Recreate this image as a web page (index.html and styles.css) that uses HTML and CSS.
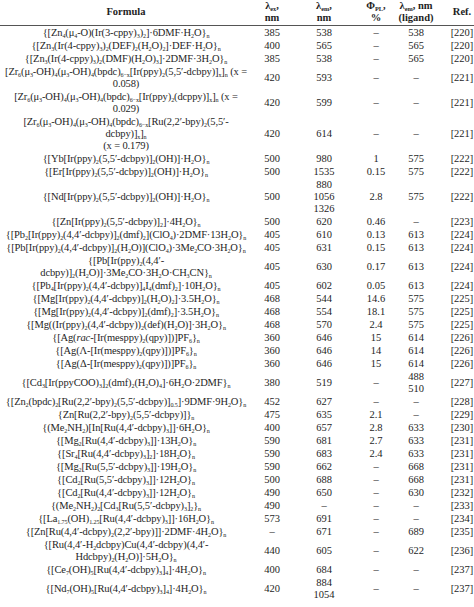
FILE: index.html
```html
<!DOCTYPE html>
<html>
<head>
<meta charset="utf-8">
<link rel="stylesheet" href="styles.css">
</head>
<body>
<table class="tbl">
<colgroup>
<col class="c-formula"><col class="c-ex"><col class="c-em"><col class="c-phi"><col class="c-lig"><col class="c-ref">
</colgroup>
<thead>
<tr>
<th>Formula</th>
<th>λ<sub>ex</sub>,<br>nm</th>
<th>λ<sub>em</sub>,<br>nm</th>
<th>Φ<sub>PL</sub>,<br>%</th>
<th>λ<sub>em</sub>, nm<br>(ligand)</th>
<th>Ref.</th>
</tr>
</thead>
<tbody>
<tr><td class="f">{[Zn<sub>4</sub>(μ<sub>4</sub>-O)(Ir(3-cppy)<sub>3</sub>)<sub>2</sub>]·6DMF·H<sub>2</sub>O}<sub>n</sub></td><td>385</td><td>538</td><td>–</td><td>538</td><td>[220]</td></tr>
<tr><td class="f">{[Zn<sub>3</sub>(Ir(4-cppy)<sub>3</sub>)<sub>2</sub>(DEF)<sub>2</sub>(H<sub>2</sub>O)<sub>2</sub>]·DEF·H<sub>2</sub>O}<sub>n</sub></td><td>400</td><td>565</td><td>–</td><td>565</td><td>[220]</td></tr>
<tr><td class="f">{[Zn<sub>3</sub>(Ir(4-cppy)<sub>3</sub>)<sub>2</sub>(DMF)(H<sub>2</sub>O)<sub>3</sub>]·2DMF·3H<sub>2</sub>O}<sub>n</sub></td><td>385</td><td>538</td><td>–</td><td>565</td><td>[220]</td></tr>
<tr><td class="f">[Zr<sub>6</sub>(μ<sub>3</sub>-OH)<sub>4</sub>(μ<sub>3</sub>-OH)<sub>4</sub>(bpdc)<sub>6−x</sub>[Ir(ppy)<sub>2</sub>(5,5′-dcbpy)]<sub>x</sub>]<sub>n</sub> (x =<br>0.058)</td><td>420</td><td>593</td><td>–</td><td>–</td><td>[221]</td></tr>
<tr><td class="f">[Zr<sub>6</sub>(μ<sub>3</sub>-OH)<sub>4</sub>(μ<sub>3</sub>-OH)<sub>4</sub>(bpdc)<sub>6−x</sub>[Ir(ppy)<sub>2</sub>(dcppy)]<sub>x</sub>]<sub>n</sub> (x =<br>0.029)</td><td>420</td><td>599</td><td>–</td><td>–</td><td>[221]</td></tr>
<tr><td class="f">[Zr<sub>6</sub>(μ<sub>3</sub>-OH)<sub>4</sub>(μ<sub>3</sub>-OH)<sub>4</sub>(bpdc)<sub>6−x</sub>[Ru(2,2′-bpy)<sub>2</sub>(5,5′-<br>dcbpy)]<sub>x</sub>]<sub>n</sub><br>(x = 0.179)</td><td>420</td><td>614</td><td>–</td><td>–</td><td>[221]</td></tr>
<tr><td class="f">{[Yb[Ir(ppy)<sub>2</sub>(5,5′-dcbpy)]<sub>2</sub>(OH)]·H<sub>2</sub>O}<sub>n</sub></td><td>500</td><td>980</td><td>1</td><td>575</td><td>[222]</td></tr>
<tr><td class="f">{[Er[Ir(ppy)<sub>2</sub>(5,5′-dcbpy)]<sub>2</sub>(OH)]·H<sub>2</sub>O}<sub>n</sub></td><td>500</td><td>1535</td><td>0.15</td><td>575</td><td>[222]</td></tr>
<tr><td class="f">{[Nd[Ir(ppy)<sub>2</sub>(5,5′-dcbpy)]<sub>2</sub>(OH)]·H<sub>2</sub>O}<sub>n</sub></td><td>500</td><td>880<br>1056<br>1326</td><td>2.8</td><td>575</td><td>[222]</td></tr>
<tr><td class="f">{[Zn[Ir(ppy)<sub>2</sub>(5,5′-dcbpy)]<sub>2</sub>]·4H<sub>2</sub>O}<sub>n</sub></td><td>500</td><td>620</td><td>0.46</td><td>–</td><td>[223]</td></tr>
<tr><td class="f">{[Pb<sub>2</sub>[Ir(ppy)<sub>2</sub>(4,4′-dcbpy)]<sub>2</sub>(dmf)<sub>2</sub>](ClO<sub>4</sub>)·2DMF·13H<sub>2</sub>O}<sub>n</sub></td><td>405</td><td>610</td><td>0.13</td><td>613</td><td>[224]</td></tr>
<tr><td class="f">{[Pb[Ir(ppy)<sub>2</sub>(4,4′-dcbpy)]<sub>2</sub>(H<sub>2</sub>O)](ClO<sub>4</sub>)·3Me<sub>2</sub>CO·3H<sub>2</sub>O}<sub>n</sub></td><td>405</td><td>631</td><td>0.15</td><td>613</td><td>[224]</td></tr>
<tr><td class="f">{[Pb[Ir(ppy)<sub>2</sub>(4,4′-<br>dcbpy)]<sub>2</sub>(H<sub>2</sub>O)]·3Me<sub>2</sub>CO·3H<sub>2</sub>O·CH<sub>3</sub>CN}<sub>n</sub></td><td>405</td><td>630</td><td>0.17</td><td>613</td><td>[224]</td></tr>
<tr><td class="f">{[Pb<sub>4</sub>[Ir(ppy)<sub>2</sub>(4,4′-dcbpy)]<sub>4</sub>I<sub>4</sub>(dmf)<sub>2</sub>]·10H<sub>2</sub>O}<sub>n</sub></td><td>405</td><td>602</td><td>0.05</td><td>613</td><td>[224]</td></tr>
<tr><td class="f">{[Mg[Ir(ppy)<sub>2</sub>(4,4′-dcbpy)]<sub>2</sub>(H<sub>2</sub>O)<sub>2</sub>]·3.5H<sub>2</sub>O}<sub>n</sub></td><td>468</td><td>544</td><td>14.6</td><td>575</td><td>[225]</td></tr>
<tr><td class="f">{[Mg[Ir(ppy)<sub>2</sub>(4,4′-dcbpy)]<sub>2</sub>(dmf)<sub>2</sub>]·3.5H<sub>2</sub>O}<sub>n</sub></td><td>468</td><td>554</td><td>18.1</td><td>575</td><td>[225]</td></tr>
<tr><td class="f">{[Mg((Ir(ppy)<sub>2</sub>(4,4′-dcbpy))<sub>2</sub>(def)(H<sub>2</sub>O)]·3H<sub>2</sub>O}<sub>n</sub></td><td>468</td><td>570</td><td>2.4</td><td>575</td><td>[225]</td></tr>
<tr><td class="f">{[Ag(<i>rac</i>-[Ir(mesppy)<sub>2</sub>(qpy)])]PF<sub>6</sub>}<sub>n</sub></td><td>360</td><td>646</td><td>15</td><td>614</td><td>[226]</td></tr>
<tr><td class="f">{[Ag(Λ-[Ir(mesppy)<sub>2</sub>(qpy)])]PF<sub>6</sub>}<sub>n</sub></td><td>360</td><td>646</td><td>14</td><td>614</td><td>[226]</td></tr>
<tr><td class="f">{[Ag(Δ-[Ir(mesppy)<sub>2</sub>(qpy)])]PF<sub>6</sub>}<sub>n</sub></td><td>360</td><td>646</td><td>15</td><td>614</td><td>[226]</td></tr>
<tr><td class="f">{[Cd<sub>3</sub>[Ir(ppyCOO)<sub>3</sub>]<sub>2</sub>(dmf)<sub>2</sub>(H<sub>2</sub>O)<sub>4</sub>]·6H<sub>2</sub>O·2DMF}<sub>n</sub></td><td>380</td><td>519</td><td>–</td><td>488<br>510</td><td>[227]</td></tr>
<tr><td class="f">{[Zn<sub>2</sub>(bpdc)<sub>2</sub>[Ru(2,2′-bpy)<sub>2</sub>(5,5′-dcbpy)]<sub>0.5</sub>]·9DMF·9H<sub>2</sub>O}<sub>n</sub></td><td>452</td><td>627</td><td>–</td><td>–</td><td>[228]</td></tr>
<tr><td class="f">{Zn[Ru(2,2′-bpy)<sub>2</sub>(5,5′-dcbpy)]}<sub>n</sub></td><td>475</td><td>635</td><td>2.1</td><td>–</td><td>[229]</td></tr>
<tr><td class="f">{(Me<sub>2</sub>NH<sub>2</sub>)[In[Ru(4,4′-dcbpy)<sub>3</sub>]]·6H<sub>2</sub>O}<sub>n</sub></td><td>400</td><td>657</td><td>2.8</td><td>633</td><td>[230]</td></tr>
<tr><td class="f">{[Mg<sub>2</sub>[Ru(4,4′-dcbpy)<sub>3</sub>]]·13H<sub>2</sub>O}<sub>n</sub></td><td>590</td><td>681</td><td>2.7</td><td>633</td><td>[231]</td></tr>
<tr><td class="f">{[Sr<sub>4</sub>[Ru(4,4′-dcbpy)<sub>3</sub>]<sub>2</sub>]·18H<sub>2</sub>O}<sub>n</sub></td><td>590</td><td>683</td><td>2.4</td><td>633</td><td>[231]</td></tr>
<tr><td class="f">{[Mg<sub>2</sub>[Ru(5,5′-dcbpy)<sub>3</sub>]]·19H<sub>2</sub>O}<sub>n</sub></td><td>590</td><td>662</td><td>–</td><td>668</td><td>[231]</td></tr>
<tr><td class="f">{[Cd<sub>2</sub>[Ru(5,5′-dcbpy)<sub>3</sub>]]·12H<sub>2</sub>O}<sub>n</sub></td><td>500</td><td>688</td><td>–</td><td>668</td><td>[231]</td></tr>
<tr><td class="f">{[Cd<sub>2</sub>[Ru(4,4′-dcbpy)<sub>3</sub>]]·12H<sub>2</sub>O}<sub>n</sub></td><td>490</td><td>650</td><td>–</td><td>630</td><td>[232]</td></tr>
<tr><td class="f">{(Me<sub>2</sub>NH<sub>2</sub>)<sub>2</sub>[Cd<sub>3</sub>[Ru(5,5′-dcbpy)<sub>3</sub>]<sub>2</sub>}<sub>n</sub></td><td>490</td><td>–</td><td>–</td><td>–</td><td>[233]</td></tr>
<tr><td class="f">{[La<sub>1.75</sub>(OH)<sub>1.25</sub>[Ru(4,4′-dcbpy)<sub>3</sub>]]·16H<sub>2</sub>O}<sub>n</sub></td><td>573</td><td>691</td><td>–</td><td>–</td><td>[234]</td></tr>
<tr><td class="f">{[Zn[Ru(4,4′-dcbpy)<sub>2</sub>(2,2′-bpy)]]·2DMF·4H<sub>2</sub>O}<sub>n</sub></td><td>–</td><td>671</td><td>–</td><td>689</td><td>[235]</td></tr>
<tr><td class="f">{[Ru(4,4′-H<sub>2</sub>dcbpy)Cu(4,4′-dcbpy)(4,4′-<br>Hdcbpy)<sub>2</sub>(H<sub>2</sub>O)]·5H<sub>2</sub>O}<sub>n</sub></td><td>440</td><td>605</td><td>–</td><td>622</td><td>[236]</td></tr>
<tr><td class="f">{[Ce<sub>7</sub>(OH)<sub>5</sub>[Ru(4,4′-dcbpy)<sub>3</sub>]<sub>4</sub>]·4H<sub>2</sub>O}<sub>n</sub></td><td>400</td><td>684</td><td>–</td><td>–</td><td>[237]</td></tr>
<tr><td class="f">{[Nd<sub>7</sub>(OH)<sub>5</sub>[Ru(4,4′-dcbpy)<sub>3</sub>]<sub>4</sub>]·4H<sub>2</sub>O}<sub>n</sub></td><td>420</td><td>884<br>1054</td><td>–</td><td>–</td><td>[237]</td></tr>
</tbody>
</table>
</body>
</html>
```

FILE: styles.css
```css
html, body {
  margin: 0;
  padding: 0;
  background: #ffffff;
  overflow: hidden;
}
body {
  width: 474px;
  height: 607px;
}
.tbl {
  border-collapse: collapse;
  table-layout: fixed;
  width: 488px;
  margin: 0;
  font-family: "Liberation Serif", "Times New Roman", serif;
  font-size: 10.5px;
  line-height: 12px;
  color: #1e1e1e;
}
.c-formula { width: 252px; }
.c-ex { width: 40px; }
.c-em { width: 64px; }
.c-phi { width: 40px; }
.c-lig { width: 40px; }
.c-ref { width: 52px; }
.tbl th {
  font-weight: bold;
  text-align: center;
  vertical-align: middle;
  padding: 0 0 1px;
  border-bottom: 1px solid #555555;
  white-space: nowrap;
}
.tbl td {
  text-align: center;
  vertical-align: middle;
  padding: 0.5px 0;
  white-space: nowrap;
}
.tbl td.f {
  letter-spacing: -0.12px;
}
.tbl sub {
  font-size: 0.58em;
  line-height: 0;
  vertical-align: -0.25em;
}
.tbl th sub {
  font-size: 0.6em;
}
```
